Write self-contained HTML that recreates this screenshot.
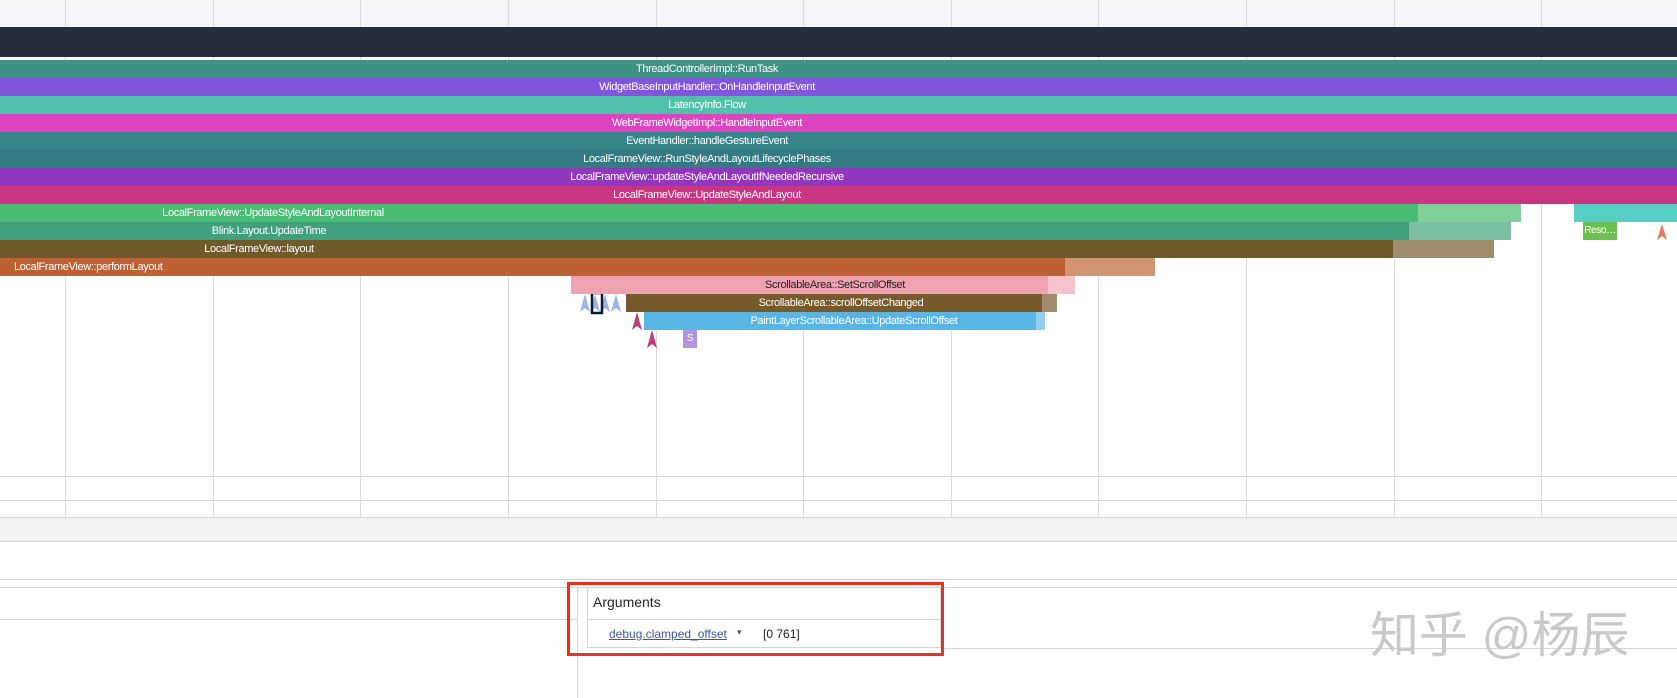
<!DOCTYPE html>
<html><head><meta charset="utf-8"><style>
body{margin:0;width:1677px;height:698px;overflow:hidden;background:#fff;position:relative;font-family:"Liberation Sans",sans-serif}
div{position:absolute;box-sizing:border-box}
.g{width:1px;background:#d8dbe0;top:0;height:517px}
.b{height:18px;color:#fff;font-size:11px;line-height:18px;text-align:center;white-space:nowrap;overflow:hidden;letter-spacing:-0.35px}
.h{height:1px;background:#d6d6d6;left:0;width:1677px}
</style></head><body>
<div style="left:0;top:0;width:1677px;height:27px;background:#f4f7fa"></div>
<div class="g" style="left:65px"></div><div class="g" style="left:213px"></div><div class="g" style="left:360px"></div><div class="g" style="left:508px"></div><div class="g" style="left:656px"></div><div class="g" style="left:803px"></div><div class="g" style="left:951px"></div><div class="g" style="left:1098px"></div><div class="g" style="left:1246px"></div><div class="g" style="left:1394px"></div><div class="g" style="left:1541px"></div>
<div style="left:0;top:27px;width:1677px;height:30px;background:#272e3b"></div>
<div class="b" style="left:0;top:60px;width:1677px;background:#3e9285"><div style="position:absolute;left:0;width:1414px">ThreadControllerImpl::RunTask</div></div>
<div class="b" style="left:0;top:78px;width:1677px;background:#8155dc"><div style="position:absolute;left:0;width:1414px">WidgetBaseInputHandler::OnHandleInputEvent</div></div>
<div class="b" style="left:0;top:96px;width:1677px;background:#52c1ab"><div style="position:absolute;left:0;width:1414px">LatencyInfo.Flow</div></div>
<div class="b" style="left:0;top:114px;width:1677px;background:#dd44c0"><div style="position:absolute;left:0;width:1414px">WebFrameWidgetImpl::HandleInputEvent</div></div>
<div class="b" style="left:0;top:132px;width:1677px;background:#37868a"><div style="position:absolute;left:0;width:1414px">EventHandler::handleGestureEvent</div></div>
<div class="b" style="left:0;top:150px;width:1677px;background:#347a82"><div style="position:absolute;left:0;width:1414px">LocalFrameView::RunStyleAndLayoutLifecyclePhases</div></div>
<div class="b" style="left:0;top:168px;width:1677px;background:#9236bd"><div style="position:absolute;left:0;width:1414px">LocalFrameView::updateStyleAndLayoutIfNeededRecursive</div></div>
<div class="b" style="left:0;top:186px;width:1677px;background:#c93581"><div style="position:absolute;left:0;width:1414px">LocalFrameView::UpdateStyleAndLayout</div></div>
<div class="b" style="left:0;top:204px;width:1418px;background:#49bd74"><div style="position:absolute;left:0;width:546px">LocalFrameView::UpdateStyleAndLayoutInternal</div></div>
<div class="b" style="left:1418px;top:204px;width:103px;background:#7fcf9b"></div>
<div class="b" style="left:1574px;top:204px;width:103px;background:#58cfc4"></div>
<div class="b" style="left:0;top:222px;width:1409px;background:#41a07e"><div style="position:absolute;left:0;width:538px">Blink.Layout.UpdateTime</div></div>
<div class="b" style="left:1409px;top:222px;width:102px;background:#7dbfa3"></div>
<div class="b" style="left:1583px;top:222px;width:34px;background:#6bc050;font-size:10px">Reso…</div>
<svg style="position:absolute;left:1657px;top:224px" width="10" height="16"><path d="M5 0L10 16L5 12L0 16Z" fill="#e8755a"/></svg>
<div class="b" style="left:0;top:240px;width:1393px;background:#715a29"><div style="position:absolute;left:0;width:518px">LocalFrameView::layout</div></div>
<div class="b" style="left:1393px;top:240px;width:101px;background:#9f8c6b"></div>
<div class="b" style="left:0;top:258px;width:1065px;background:#bd6134;text-align:left;padding-left:14px">LocalFrameView::performLayout</div>
<div class="b" style="left:1065px;top:258px;width:90px;background:#d29573"></div>
<div class="b" style="left:571px;top:276px;width:477px;background:#f0a2b0;color:#222"><div style="position:absolute;left:0;width:528px">ScrollableArea::SetScrollOffset</div></div>
<div class="b" style="left:1048px;top:276px;width:27px;background:#f6c3cc"></div>
<div class="b" style="left:626px;top:294px;width:416px;background:#765a2b"><div style="position:absolute;left:0;width:430px">ScrollableArea::scrollOffsetChanged</div></div>
<div class="b" style="left:1042px;top:294px;width:15px;background:#a08c6a"></div>
<div class="b" style="left:644px;top:312px;width:392px;background:#58b5e6"><div style="position:absolute;left:0;width:420px">PaintLayerScrollableArea::UpdateScrollOffset</div></div>
<div class="b" style="left:1036px;top:312px;width:9px;background:#93cef0"></div>
<svg style="position:absolute;left:580px;top:294px" width="80" height="56">
<path d="M5 0L10 18L5 14L0 18Z M15 0L20 18L15 14L10 18Z M25 0L30 18L25 14L20 18Z M36 0L41 18L36 14L31 18Z" fill="#9bb5e8"/>
<rect x="12" y="-1" width="10" height="20" fill="none" stroke="#111a2e" stroke-width="2.5"/>
<path d="M57 18L62 36L57 32L52 36Z" fill="#c03a7e"/>
<path d="M72 36L77 54L72 50L67 54Z" fill="#c03a7e"/>
</svg>
<div class="b" style="left:683px;top:330px;width:14px;background:#b393e0;font-size:10px">S</div>
<div class="h" style="top:476px"></div><div class="h" style="top:500px"></div>
<div style="left:0;top:517px;width:1677px;height:25px;background:#f1f1f1;border-top:1px solid #d6d6d6;border-bottom:1px solid #d6d6d6"></div>
<div class="h" style="top:579px"></div><div class="h" style="top:587px"></div>
<div class="h" style="top:619px;width:577px"></div>
<div class="h" style="top:648px;left:941px;width:736px"></div>
<div style="left:577px;top:587px;width:1px;height:111px;background:#d6d6d6"></div>
<div style="left:587px;top:587px;width:354px;height:61px;border:1px solid #d6d6d6;background:#fff"></div>
<div style="left:587px;top:619px;width:354px;height:1px;background:#d6d6d6"></div>
<div style="left:593px;top:594px;font-size:14px;color:#222">Arguments</div>
<div style="left:609px;top:627px;font-size:12px;color:#3a5a9a;text-decoration:underline">debug.clamped_offset</div>
<div style="left:737px;top:627px;font-size:9px;color:#555">▾</div>
<div style="left:763px;top:627px;font-size:12px;color:#222">[0 761]</div>
<div style="left:567px;top:582px;width:377px;height:74px;border:3px solid #e8321f"></div>
<div style="left:1370px;top:596px;font-size:49px;color:#c9c9c9;font-family:'Liberation Sans','Noto Sans CJK SC',sans-serif;white-space:nowrap">知乎 @杨辰</div>
</body></html>
